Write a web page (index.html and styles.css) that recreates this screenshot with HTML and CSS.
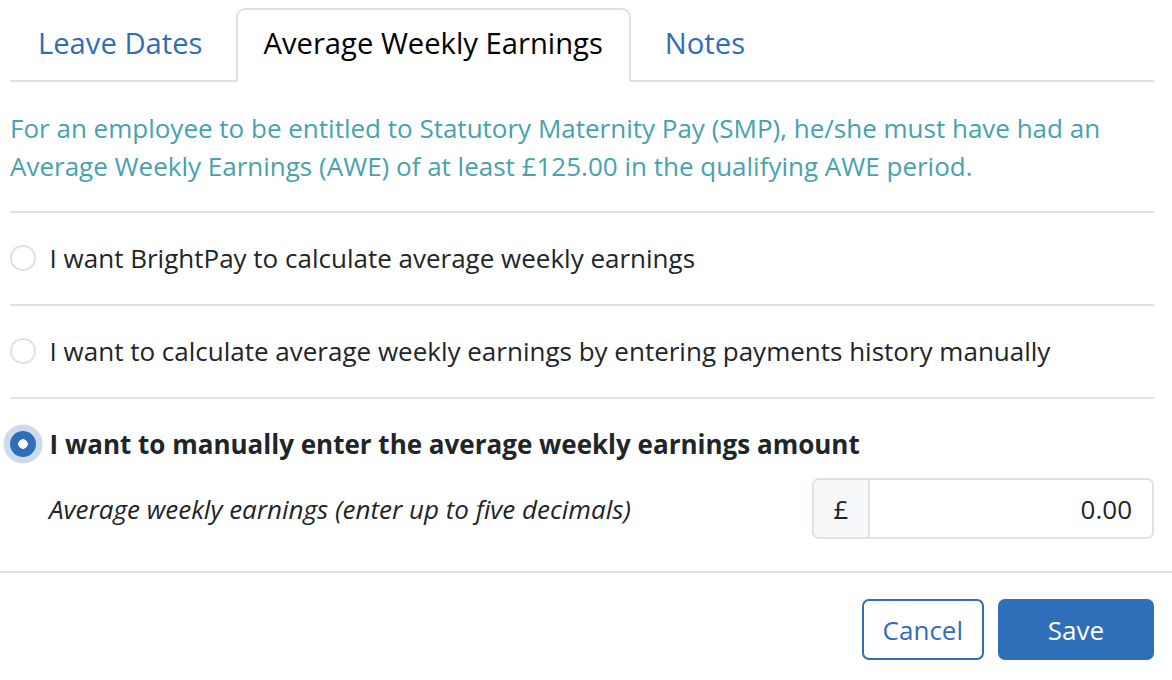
FILE: index.html
```html
<!DOCTYPE html>
<html lang="en">
<head>
    <meta charset="UTF-8">
    <meta name="viewport" content="width=device-width, initial-scale=1.0">
    <title>Average Weekly Earnings</title>
    <link rel="stylesheet" href="styles.css">
</head>
<body>
<div class="modal">
    <div class="modal-body">
        <ul class="tabs">
            <li class="tab">Leave Dates</li>
            <li class="tab active">Average Weekly Earnings</li>
            <li class="tab">Notes</li>
        </ul>

        <p class="info">For an employee to be entitled to Statutory Maternity Pay (SMP), he/she must have had an Average Weekly Earnings (AWE) of at least £125.00 in the qualifying AWE period.</p>

        <div class="option">
            <label class="radio-row">
                <input type="radio" name="awe" class="radio">
                <span>I want BrightPay to calculate average weekly earnings</span>
            </label>
        </div>
        <div class="option">
            <label class="radio-row">
                <input type="radio" name="awe" class="radio">
                <span>I want to calculate average weekly earnings by entering payments history manually</span>
            </label>
        </div>
        <div class="option option-last">
            <label class="radio-row selected">
                <input type="radio" name="awe" class="radio" checked>
                <span>I want to manually enter the average weekly earnings amount</span>
            </label>
            <div class="amount-row">
                <span class="amount-label">Average weekly earnings (enter up to five decimals)</span>
                <div class="input-group">
                    <span class="input-prefix">£</span>
                    <input type="text" class="input-value" value="0.00">
                </div>
            </div>
        </div>
    </div>

    <div class="modal-footer">
        <button class="btn btn-outline">Cancel</button>
        <button class="btn btn-primary">Save</button>
    </div>
</div>
</body>
</html>
```

FILE: styles.css
```css
:root {
    --blue: #2f6eb8;
    --teal: #47a2af;
    --text: #212529;
    --line: #dee2e6;
}

* {
    box-sizing: border-box;
}

body {
    margin: 0;
    background: #fff;
    font-family: 'Open Sans', 'Noto Sans', sans-serif;
    font-size: 26px;
    line-height: 38px;
    color: var(--text);
}

.modal-body {
    padding: 8px 18px 0 10px;
}

.tabs {
    list-style: none;
    margin: 0;
    padding: 0;
    display: flex;
    gap: 6px;
    border-bottom: 2px solid var(--line);
}

.tab {
    font-size: 29.2px;
    line-height: 42px;
    padding: 12px 26px 16px;
    color: var(--blue);
    border: 2px solid transparent;
    border-bottom: none;
    border-radius: 9px 9px 0 0;
    margin-bottom: -2px;
}

.tab:first-child {
    margin-right: -1px;
}

.tab.active {
    color: #000;
    background: #fff;
    border-color: var(--line);
    padding-bottom: 18px;
}

.info {
    color: var(--teal);
    margin: 0;
    padding: 27px 0 26px;
    border-bottom: 2px solid var(--line);
}

.option {
    border-bottom: 2px solid var(--line);
    padding: 26px 0 27px;
}

.option-last {
    border-bottom: none;
    padding-bottom: 32px;
}

.radio-row {
    display: flex;
    align-items: center;
    gap: 14px;
}

.radio {
    appearance: none;
    -webkit-appearance: none;
    margin: 0;
    width: 25.6px;
    height: 25.6px;
    border: 2px solid var(--line);
    border-radius: 50%;
    background: #fff;
    flex-shrink: 0;
}

.radio:checked {
    border: none;
    background: radial-gradient(circle, #fff 0 4.5px, var(--blue) 5px);
    box-shadow: 0 0 0 6.5px rgba(47, 110, 184, 0.25);
}

.selected span {
    font-weight: 700;
}

.amount-row {
    display: flex;
    align-items: center;
    justify-content: space-between;
    margin-top: 15px;
    padding-left: 39px;
}

.amount-label {
    font-style: italic;
}

.input-group {
    display: flex;
    width: 342px;
    height: 61px;
    border: 2px solid var(--line);
    border-radius: 7px;
    overflow: hidden;
}

.input-prefix {
    width: 56px;
    display: flex;
    align-items: center;
    justify-content: center;
    background: #f7f8f9;
    border-right: 2px solid var(--line);
}

.input-value {
    flex: 1;
    min-width: 0;
    border: none;
    font: inherit;
    color: var(--text);
    text-align: right;
    padding: 0 20px;
    outline: none;
}

.modal-footer {
    border-top: 2px solid var(--line);
    padding: 26px 18px 19px;
    display: flex;
    justify-content: flex-end;
    gap: 14px;
}

.btn {
    font: inherit;
    height: 61px;
    border-radius: 7px;
    padding: 0 19px;
    cursor: pointer;
}

.btn-outline {
    background: #fff;
    color: var(--blue);
    border: 2px solid var(--blue);
}

.btn-primary {
    background: var(--blue);
    color: #fff;
    border: 2px solid var(--blue);
    width: 156px;
}
```
